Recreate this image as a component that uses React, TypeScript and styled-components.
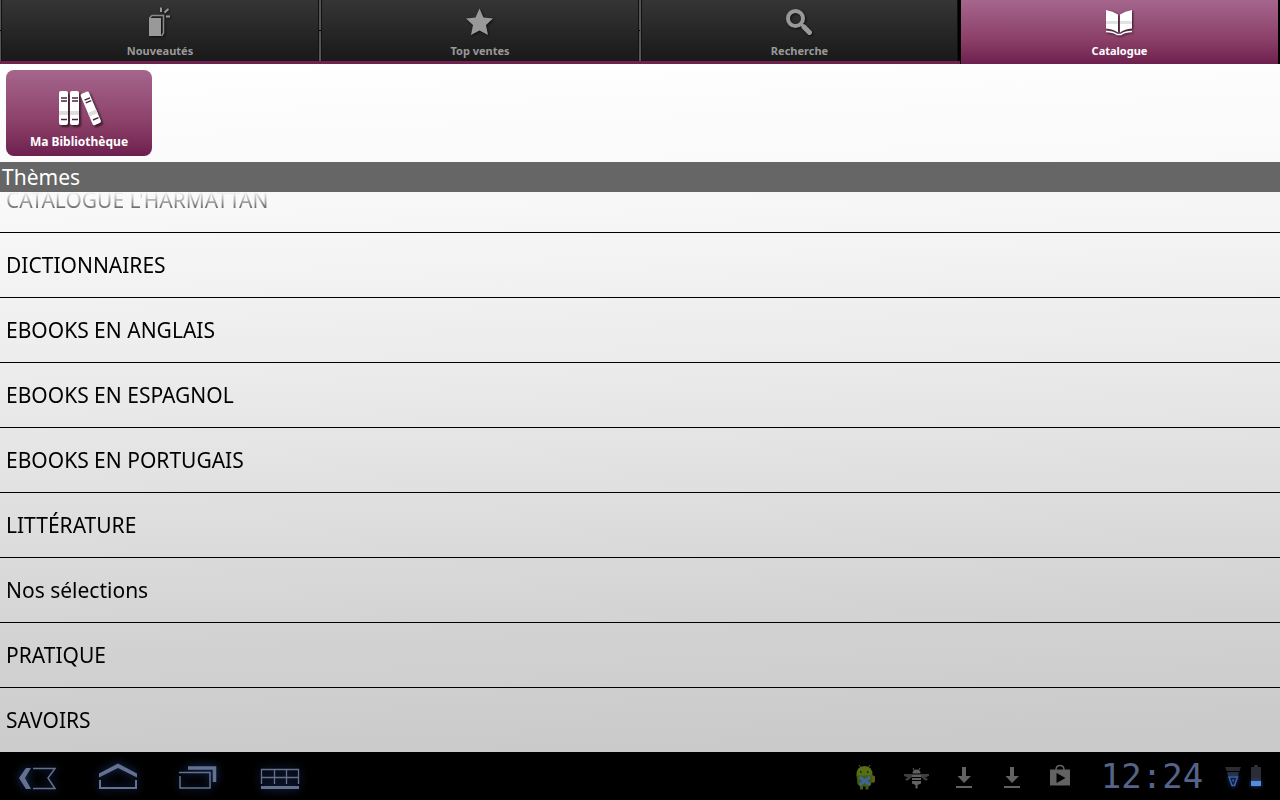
import React from "react";
import styled, { createGlobalStyle, css } from "styled-components";

const GlobalStyle = createGlobalStyle`
  * { box-sizing: border-box; }
  body { margin: 0; background: #000; }
  button { margin: 0; padding: 0; border: 0; background: none; font: inherit; color: inherit; cursor: pointer; }
  svg { display: block; }
`;

const plum = "linear-gradient(#a5668d, #8c4169 60%, #6d204e)";

const Screen = styled.div`
  display: flex;
  flex-direction: column;
  height: 100vh;
  overflow: hidden;
  font-family: "Noto Sans", "Open Sans", sans-serif;
  background: linear-gradient(178deg, #fff 8%, #f9f9f9 24%, #e8e8e8 50%, #d2d2d2 77%, #c9c9c9 94%);
`;

const TabBar = styled.nav`
  display: grid;
  grid-template-columns: repeat(4, 1fr);
  height: 64px;
  flex: none;
  background: linear-gradient(#000 61px, #6f2250 61px);
`;

const Tab = styled.button<{ $active?: boolean }>`
  display: flex;
  flex-direction: column;
  align-items: center;
  height: 61px;
  padding-top: 6px;
  border: solid #555;
  border-width: 0 1px;
  border-image: linear-gradient(#555 30px, #000 30px, #000 31px, #555 31px) 0 1;
  box-shadow: inset 1px 0 #111, inset -1px 0 #111;
  font-size: 11px;
  font-weight: 700;
  line-height: 16px;
  color: #999;
  background: linear-gradient(#353535, #191919);
  &:nth-child(3) {
    border-right: 2px solid #000;
    border-image: linear-gradient(to right, #555 50%, #000 50%) 0 1 0 2;
  }
  ${(p) =>
    p.$active &&
    css`
      height: 64px;
      border-image: none;
      border-left: 1px solid #000;
      border-right: 2px solid #000;
      box-shadow: none;
      color: #fff;
      background: ${plum};
    `}
`;

const TabIcon = styled.svg`
  width: 32px;
  height: 32px;
  margin-bottom: 5px;
  filter: drop-shadow(1px 1px 1px rgba(0, 0, 0, 0.7));
`;

const Shelf = styled.div`
  flex: none;
  padding: 6px;
  height: 98px;
`;

const LibraryButton = styled.button`
  display: flex;
  flex-direction: column;
  align-items: center;
  width: 146px;
  height: 86px;
  padding-top: 18px;
  border-radius: 8px;
  background: ${plum};
  color: #fff;
  font-size: 12px;
  font-weight: 700;
  line-height: 16px;
`;

const LibraryIcon = styled.svg`
  width: 48px;
  height: 40px;
  margin-bottom: 6px;
  filter: drop-shadow(2px 2px 1px rgba(0, 0, 0, 0.6));
`;

const SectionTitle = styled.h1`
  flex: none;
  margin: 0;
  padding: 0 2px;
  background: #666;
  color: #fff;
  font-size: 21px;
  font-weight: 400;
  line-height: 30px;
`;

const ThemePane = styled.main`
  flex: 1;
  min-height: 0;
  overflow: hidden;
  mask-image: linear-gradient(transparent, #000 28px);
`;

const ThemeList = styled.ul`
  list-style: none;
  margin: -24px 0 0;
  padding: 0;
`;

const ThemeItem = styled.li`
  border-bottom: 1px solid #000;
  &:last-child { border-bottom: 0; }
`;

const ThemeLink = styled.a`
  display: block;
  padding: 0 6px;
  color: #000;
  font-size: 21px;
  line-height: 64px;
  text-decoration: none;
`;

const SystemBar = styled.footer`
  display: flex;
  justify-content: space-between;
  flex: none;
  height: 48px;
  padding-right: 12px;
  background: #000;
`;

const Group = styled.div`
  display: flex;
  align-items: center;
`;

const NavIcon = styled.svg`
  width: 80px;
  height: 48px;
  fill: none;
  stroke: #66718f;
  stroke-width: 2;
  filter: drop-shadow(0 0 4px #1d3a78);
`;

const TrayIcon = styled.svg`
  width: 48px;
  height: 48px;
`;

const GaugeIcon = styled.svg`
  width: 24px;
  height: 48px;
`;

const Level = styled.path`
  filter: drop-shadow(0 0 2px #2450a8);
`;

const Clock = styled.time`
  width: 136px;
  text-align: center;
  font-family: "DejaVu Sans Mono", monospace;
  font-size: 34px;
  line-height: 48px;
  color: #56648a;
`;

const themes = [
  "CATALOGUE L'HARMATTAN",
  "DICTIONNAIRES",
  "EBOOKS EN ANGLAIS",
  "EBOOKS EN ESPAGNOL",
  "EBOOKS EN PORTUGAIS",
  "LITTÉRATURE",
  "Nos sélections",
  "PRATIQUE",
  "SAVOIRS",
];

const tabs = [
  {
    label: "Nouveautés",
    icon: (
      <g fill="#999">
        <path d="M5 12H17V30H5z" />
        <path d="M5.500 12L8 9.500H19.500V27L17.500 30" fill="none" stroke="#8a8a8a" strokeWidth="1.500" />
        <path d="M17 1.500V6M20.500 6.500L24.500 3M22 10.500H26" stroke="#999" strokeWidth="2" />
      </g>
    ),
  },
  {
    label: "Top ventes",
    icon: <path fill="#999" d="M15.500 2.500L19.500 11.500L29 12.500L22 19L24 29L15.500 24.500L7 29L9 19L2 12.500L11.500 11.500z" />,
  },
  {
    label: "Recherche",
    icon: (
      <g fill="none" stroke="#999">
        <circle cx="11.500" cy="12.500" r="7.500" strokeWidth="4" />
        <path d="M17 18L19.500 20.500" strokeWidth="3" />
        <path d="M20 21L25.500 26.500" strokeWidth="5" strokeLinecap="round" />
      </g>
    ),
  },
  {
    label: "Catalogue",
    active: true,
    icon: (
      <g fill="#fff">
        <path d="M2 4Q9 5 14 8.500V26.500Q9 23 2 22.500z" />
        <path d="M28 4Q21 5 16 8.500V26.500Q21 23 28 22.500z" />
        <path d="M2 15H14V18H2zM16 15H28V18H16z" fill="#e2e2e2" />
        <path d="M2 25.500Q9 25.500 13 28.500H17Q21 25.500 28 25.500" fill="none" stroke="#fff" strokeWidth="1.500" />
      </g>
    ),
  },
];

const Volume = ({ place }: { place: string }) => (
  <g transform={place}>
    <rect width="9" height="34" rx="2" fill="#fff" />
    <path d="M0 20H9V24H0z" fill="#ddd" />
    <path d="M2 7H8M2 10H8M2 28.500H8" stroke="#4c2440" strokeWidth="1.500" />
  </g>
);

const Download = () => (
  <TrayIcon viewBox="0 0 48 48" fill="#626262" role="img" aria-label="Téléchargement">
    <path d="M22 15H26V24H31L24 31L17.500 24H22zM16 34H32V36H16z" />
  </TrayIcon>
);

export default function App() {
  return (
    <Screen>
      <GlobalStyle />
      <TabBar>
        {tabs.map((tab) => (
          <Tab key={tab.label} type="button" $active={tab.active} aria-current={tab.active ? "page" : undefined}>
            <TabIcon viewBox="0 0 32 32" aria-hidden="true">{tab.icon}</TabIcon>
            {tab.label}
          </Tab>
        ))}
      </TabBar>

      <Shelf>
        <LibraryButton type="button">
          <LibraryIcon viewBox="0 0 48 40" aria-hidden="true">
            <Volume place="translate(4 3)" />
            <Volume place="translate(15 3)" />
            <Volume place="translate(25 6.500) rotate(-23)" />
          </LibraryIcon>
          Ma Bibliothèque
        </LibraryButton>
      </Shelf>

      <SectionTitle>Thèmes</SectionTitle>
      <ThemePane>
        <ThemeList>
          {themes.map((theme) => (
            <ThemeItem key={theme}>
              <ThemeLink href="#">{theme}</ThemeLink>
            </ThemeItem>
          ))}
        </ThemeList>
      </ThemePane>

      <SystemBar>
        <Group>
          <button type="button" aria-label="Retour">
            <NavIcon viewBox="0 0 80 48">
              <path d="M19 26L26 16H31L25 26L31 37H26z" fill="#66718f" stroke="none" />
              <path d="M33 16.500H55L48 26L55 36.500H33" strokeWidth="1.500" />
            </NavIcon>
          </button>
          <button type="button" aria-label="Accueil">
            <NavIcon viewBox="0 0 80 48">
              <path d="M19 21.500L38 11.500L57 21.500V25.500L38 16L19 25.500z" fill="#66718f" stroke="none" />
              <path d="M20 28V36H56V28" />
            </NavIcon>
          </button>
          <button type="button" aria-label="Applications récentes">
            <NavIcon viewBox="0 0 80 48">
              <path d="M19 20.500H50V36H20V24" strokeWidth="1.500" />
              <path d="M28 16H54.500V30" strokeWidth="3.500" />
            </NavIcon>
          </button>
          <button type="button" aria-label="Clavier">
            <NavIcon viewBox="0 0 80 48">
              <path d="M21.500 32V17.500H58.500V32M34.500 17V32M46.500 17V32M21 25.500H59" strokeWidth="1.300" />
              <path d="M21 35.500H59" strokeWidth="3" />
            </NavIcon>
          </button>
        </Group>
        <Group>
          <TrayIcon viewBox="0 0 48 48" role="img" aria-label="Android">
            <path d="M15 13L17 16M26 13L24 16" stroke="#4c6310" />
            <path d="M12.500 24Q12 14 20.500 14T28.500 24z" fill="#566f16" />
            <rect x="26" y="23.500" width="5" height="7" rx="1.500" fill="#5c6019" />
            <path d="M12.500 23.500H28.500L27 33L24.500 34.500V37.500H21.500V34.500H19V37.500H16V34.500L13.500 32z" fill="#425b0c" />
            <path d="M15.500 25L26 33M26 25L15.500 33" stroke="#3d649c" strokeWidth="3" />
            <path d="M16 20H17.500M23 20H24.500" stroke="#171d05" strokeWidth="1.500" />
          </TrayIcon>
          <TrayIcon viewBox="0 0 48 48" fill="#626262" role="img" aria-label="Honeycomb">
            <path d="M20.500 21.500Q20.500 17.500 24.500 17.500T28.500 21.500z" />
            <path d="M21 16L22 18M28 16L27 18" stroke="#626262" />
            <path d="M12 22H20V25L15 29L13 27L16 25.500L12 24zM37 22H29V25L34 29L36 27L33 25.500L37 24z" fill="#3f3f3f" />
            <path d="M20 22.500H29V25H20zM20 26H29V28H20zM20 29H29V31.500L25.500 33V36.500H23.500V33L20 31.500z" />
          </TrayIcon>
          <Download />
          <Download />
          <TrayIcon viewBox="0 0 48 48" fill="#626262" role="img" aria-label="Market">
            <path d="M20 18Q20 13.500 24 13.500T28 18" fill="none" stroke="#626262" strokeWidth="1.500" />
            <path d="M14 17.500H34V33.500H14z" />
            <path d="M20.500 21L29.500 26L20.500 31z" fill="#000" />
          </TrayIcon>
          <Clock dateTime="12:24">12:24</Clock>
          <GaugeIcon viewBox="0 0 24 48" role="img" aria-label="Wi-Fi">
            <path d="M5 15H21L19.500 19H6.500zM7 20H19L18 24H8z" fill="#2a2d38" />
            <Level d="M9 25H17.500L14.500 33.500H12z" fill="none" stroke="#3d64b0" strokeWidth="1.500" />
            <path d="M12 27.500H14.500L13.200 30.500z" fill="#3d64b0" />
          </GaugeIcon>
          <GaugeIcon viewBox="0 0 24 48" role="img" aria-label="Batterie">
            <path d="M7 15H10V13H14V15H17V29H7z" fill="#2a2d38" />
            <Level d="M7 29H17V34H7z" fill="#5b88d8" />
          </GaugeIcon>
        </Group>
      </SystemBar>
    </Screen>
  );
}
